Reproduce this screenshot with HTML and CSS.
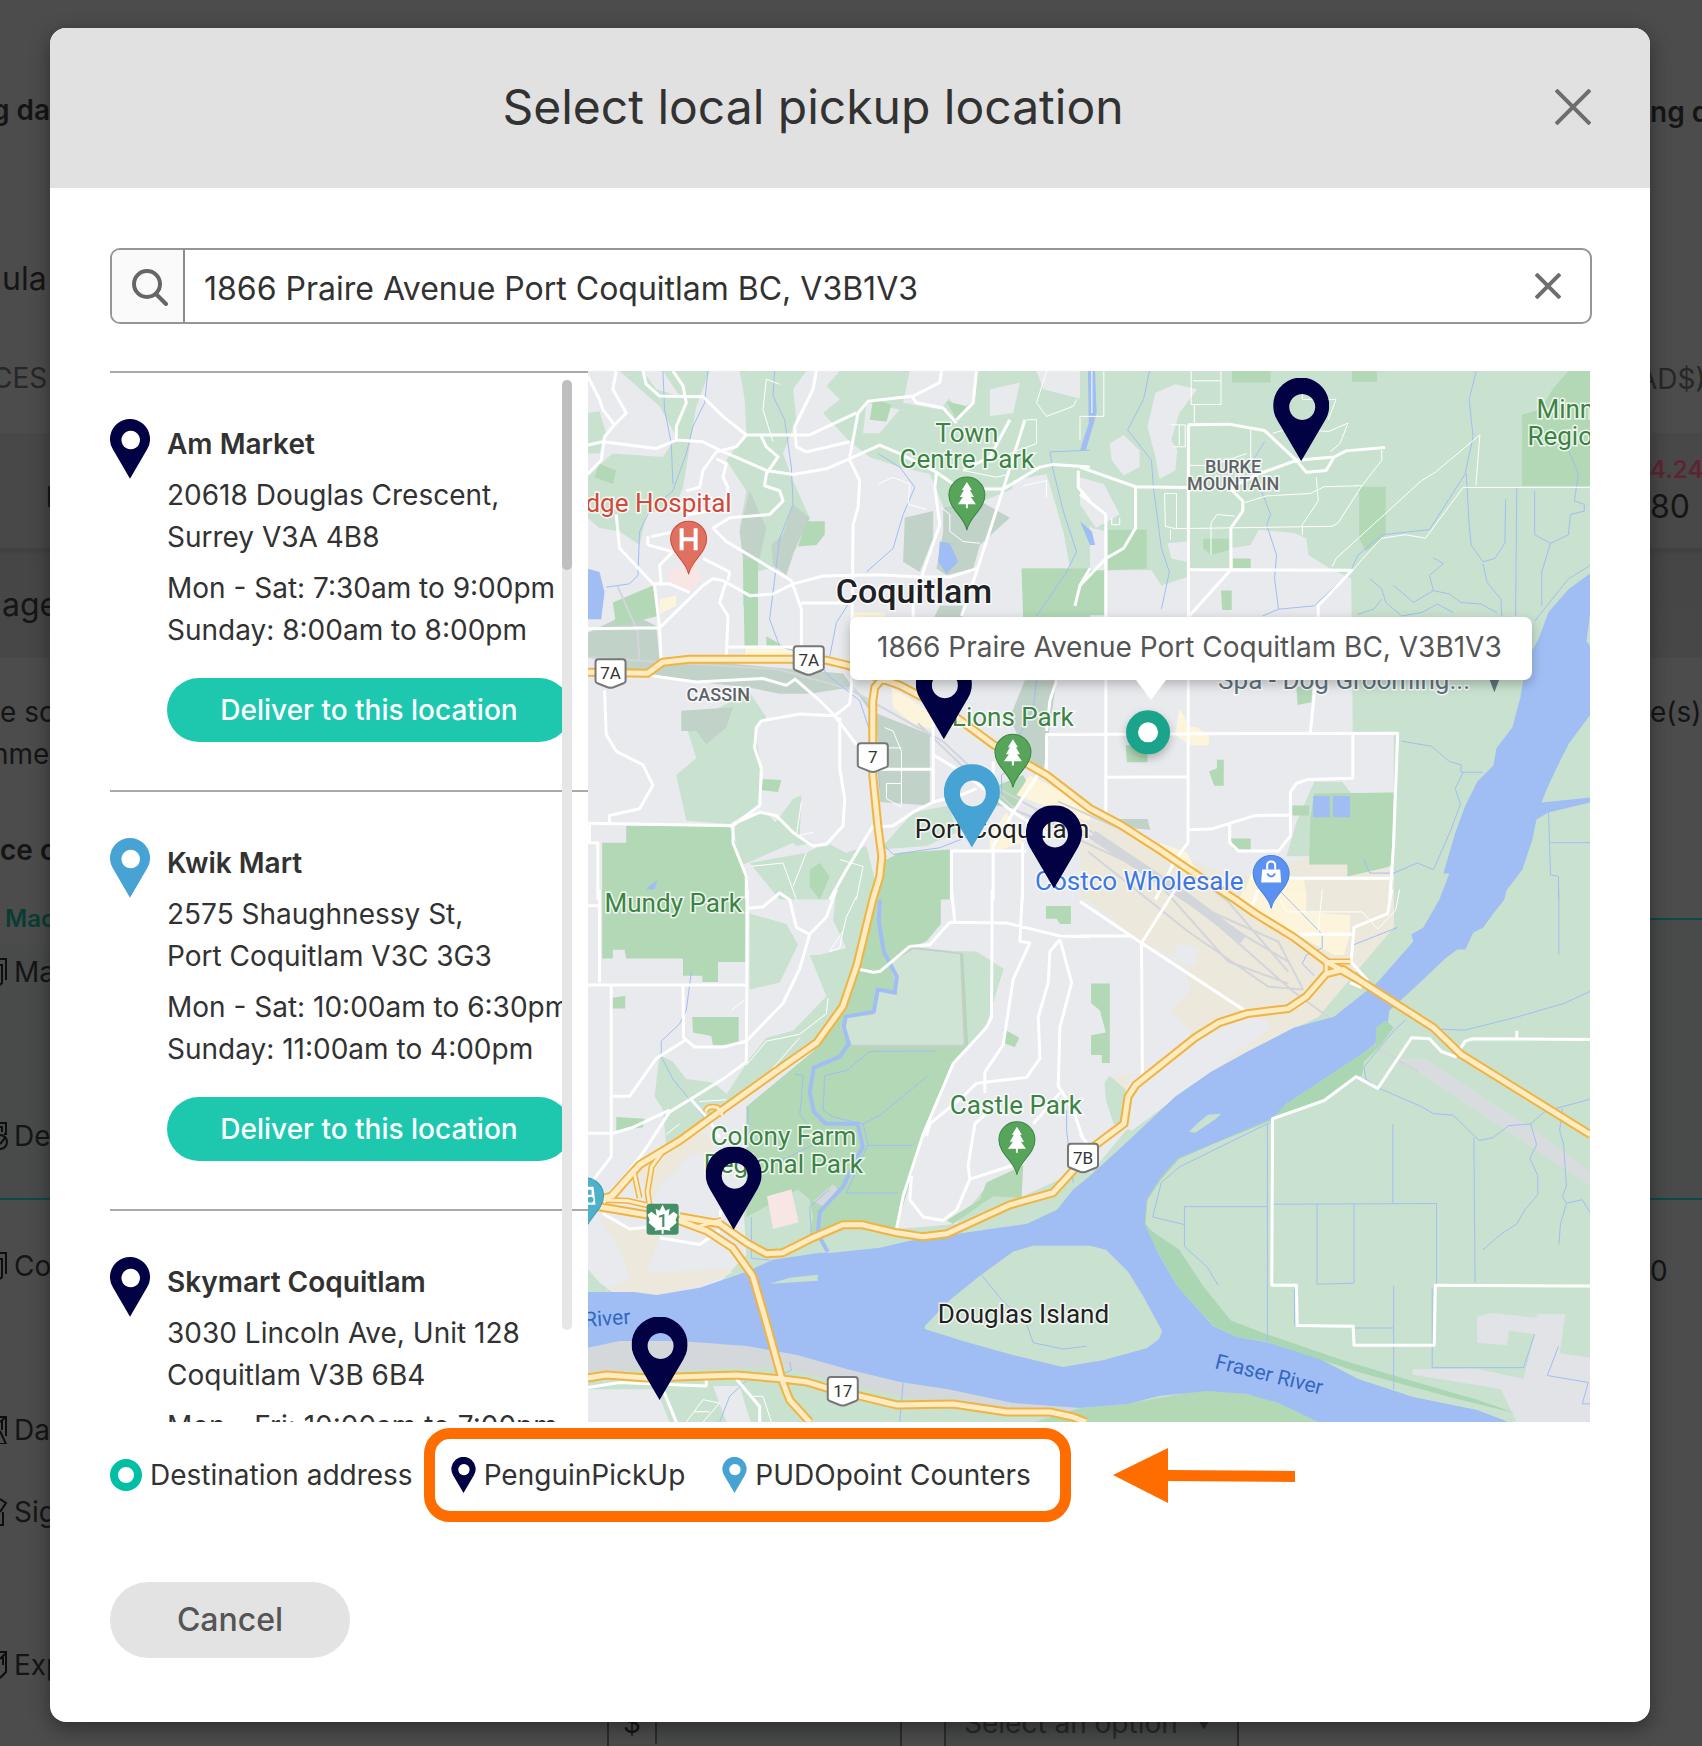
FILE: index.html
```html
<!DOCTYPE html>
<html lang="en">
<head>
  <meta charset="UTF-8" />
  <meta name="viewport" content="width=device-width, initial-scale=1.0" />
  <title>Select local pickup location</title>
  <link rel="stylesheet" href="styles.css">
</head>
<body>
  <!-- shared icon shapes -->
  <svg class="sprite" aria-hidden="true">
    <symbol id="pin" viewBox="0 0 56 83">
      <path fill="currentColor" fill-rule="evenodd" d="M28 83L4 42A28 28 0 1 1 52 42ZM29 16a13 13 0 1 0 .01 0Z" />
    </symbol>
    <symbol id="poi" viewBox="-20 -20 40 56" overflow="visible">
      <path d="M0 35C-2 22-18 14-18 0A18 18 0 0 1 18 0C18 14 2 22 0 35Z" />
    </symbol>
    <symbol id="tree" viewBox="-20 -20 40 56" overflow="visible">
      <path fill="#57a55b" stroke="#3c8443" d="M0 35C-2 22-18 14-18 0A18 18 0 0 1 18 0C18 14 2 22 0 35Z" />
      <path fill="#fff" d="M0-13L5-5H3L7 2H4L9 9H1V13H-1V9H-9L-4 2H-7L-3-5H-5Z" />
    </symbol>
    <symbol id="shield" viewBox="-16 -15 32 30" overflow="visible">
      <path fill="#fff" stroke="#777" stroke-width="2" d="M-12-14H12Q15-14 15-11V8Q15 9 13 10L3 14Q0 15-3 14L-13 10Q-15 9-15 8V-11Q-15-14-12-14Z" />
    </symbol>
    <symbol id="opt-copy" viewBox="0 0 8 28"><path d="M0 1H6V21H5M0 7H2V25L0 27" /></symbol>
    <symbol id="opt-check" viewBox="0 0 8 28"><path d="M0 1H6V12H4M0 5H2V10M0 13A7 7 0 0 1 0 27M0 22L5 16" /></symbol>
    <symbol id="opt-date" viewBox="0 0 8 28"><path d="M0 1H6V20M0 6L6 1M2 5V14M0 15L6 28H0" /></symbol>
    <symbol id="opt-sign" viewBox="0 0 8 28"><path d="M0 1L6 5L0 14M3 14V27H0" /></symbol>
    <symbol id="opt-box" viewBox="0 0 8 28"><path d="M0 1H6V21L0 27M0 8L6 2M3 6V14" /></symbol>
  </svg>

  <!-- page behind the dialog -->
  <div class="page" aria-hidden="true">
    <div class="page-left">
      <b class="cut">g da</b>
      <span class="big">ula</span>
      <span class="muted">CES</span>
      <b class="row-band">I</b>
      <span class="big">age</span>
      <span>e so</span>
      <span class="cut">nme</span>
      <b>ce o</b>
      <b class="teal">Mac</b>
      <span class="opt"><svg><use href="#opt-copy" /></svg>Ma</span>
      <span class="opt"><svg><use href="#opt-check" /></svg>De</span>
      <span class="opt"><svg><use href="#opt-copy" /></svg>Co</span>
      <span class="opt"><svg><use href="#opt-date" /></svg>Da</span>
      <span class="opt"><svg><use href="#opt-sign" /></svg>Sig</span>
      <span class="opt"><svg><use href="#opt-box" /></svg>Exp</span>
    </div>
    <div class="page-bottom">
      <span class="money"><i>$</i></span>
      <span class="select">Select an option <i>▼</i></span>
    </div>
    <div class="page-right">
      <b>ng d</b>
      <span class="muted">AD$)</span>
      <b class="red">4.24</b>
      <span class="big">80</span>
      <span>e(s),</span>
      <span>0</span>
    </div>
  </div>

  <main class="modal" role="dialog" aria-labelledby="title">
    <header class="modal-header">
      <h1 id="title">Select local pickup location</h1>
      <button class="icon-btn" aria-label="Close">
        <svg width="36" height="36" viewBox="0 0 36 36"><path d="M1 1L35 35M35 1L1 35" stroke="#6e6e6e" stroke-width="4" /></svg>
      </button>
    </header>

    <div class="modal-body">
      <form class="search">
        <label class="search-icon" for="address" aria-label="Search address">
          <svg width="38" height="38" viewBox="0 0 38 38" fill="none" stroke="#666" stroke-width="4" stroke-linecap="round"><circle cx="16" cy="16" r="13" /><path d="M25 26L35 36" /></svg>
        </label>
        <input id="address" type="text" value="1866 Praire Avenue Port Coquitlam BC, V3B1V3">
        <button class="icon-btn" type="button" aria-label="Clear">
          <svg width="26" height="26" viewBox="0 0 26 26"><path d="M1 1L25 25M25 1L1 25" stroke="#6e6e6e" stroke-width="4" /></svg>
        </button>
      </form>

      <div class="results">
        <div class="list">
          <article class="place">
            <svg class="pin navy"><use href="#pin" /></svg>
            <div class="place-info">
              <h2>Am Market</h2>
              <p>20618 Douglas Crescent,<br>Surrey V3A 4B8</p>
              <p>Mon - Sat: 7:30am to 9:00pm<br>Sunday: 8:00am to 8:00pm</p>
              <button class="deliver">Deliver to this location</button>
            </div>
          </article>
          <article class="place">
            <svg class="pin blue"><use href="#pin" /></svg>
            <div class="place-info">
              <h2>Kwik Mart</h2>
              <p>2575 Shaughnessy St,<br>Port Coquitlam V3C 3G3</p>
              <p>Mon - Sat: 10:00am to 6:30pm<br>Sunday: 11:00am to 4:00pm</p>
              <button class="deliver">Deliver to this location</button>
            </div>
          </article>
          <article class="place">
            <svg class="pin navy"><use href="#pin" /></svg>
            <div class="place-info">
              <h2>Skymart Coquitlam</h2>
              <p>3030 Lincoln Ave, Unit 128<br>Coquitlam V3B 6B4</p>
              <p>Mon - Fri: 10:00am to 7:00pm</p>
            </div>
          </article>
          <div class="scrollbar"><div class="thumb"></div></div>
        </div>

        <div class="map">
          <svg class="map-art" viewBox="0 0 1002 1050" preserveAspectRatio="xMidYMid slice">
            <rect width="1002" height="1050" fill="#e8eaed" />

            <!-- land, one group per tile -->
            <g transform="matrix(.3333 0 0 .338 -8 -2)">
              <g fill="#c9e2cf">
                <path d="M24 130L60 125 80 190 60 250 24 250ZM120 6L190 6 230 60 300 80 250 6H390L350 110 310 350 290 400 200 430 180 520 120 480 60 470 24 440V310L100 250 250 260 290 200 240 110Z" />
                <path d="M480 6H680L640 60 650 150 610 250 640 330 690 440 650 530 610 580 530 600 530 700 490 700 490 520 480 470 500 360 440 270 500 190 495 90Z" />
                <path d="M780 6H990L970 100 1080 120 1180 6H1530V740H1330V590L1390 560 1470 590 1450 480 1380 320 1260 370 1100 430 1050 310 960 290 870 260 810 215 730 130 780 90 740 50Z" />
                <path d="M305 1010L380 1020 460 980 500 940 560 1030 525 1060 545 1180 540 1290 450 1345 320 1335 290 1200 350 1150Z" />
                <path d="M510 1460L680 1430 740 1400 800 1430 860 1410 900 1568H600ZM640 1270L665 1260 660 1380 700 1400 650 1410 580 1350ZM460 1340L560 1310 640 1400 480 1470ZM1000 1310L1110 1290 1130 1370 1040 1410 900 1420Z" />
              </g>
              <g fill="#e8eaed">
                <path d="M1000 6L1190 6 1180 100 1130 120 1090 60 990 80ZM860 100L960 120 900 190 850 190ZM1230 60L1320 40 1300 130 1230 140ZM1370 6L1500 6 1510 90 1390 60ZM880 300L1000 300 1040 420 960 440 900 340ZM1300 330L1400 310 1450 480 1470 590 1320 590 1200 590 1290 420Z" />
              </g>
              <g fill="#c1d2c8">
                <path d="M510 360L560 470 540 560 490 560 480 480ZM640 400L690 440 650 520 620 610 580 580 575 520 610 490ZM24 780L150 720 230 760 240 860 440 870 790 900 870 1010 1050 1080V1290L900 1280 890 1010 820 940 690 960 600 960 500 940 200 910 24 850Z" />
                <path d="M305 1010L460 1000 440 1060 380 1110 350 1070 305 1070ZM975 440L1060 420V500L1020 600 970 570ZM1090 410L1200 390 1290 440 1200 520 1180 590 1100 610 1070 590 1090 480ZM1335 920H1430L1390 1190 1350 1170 1290 1030ZM1080 700L1150 700 1150 740H1060Z" />
              </g>
              <g fill="#b2d8b6">
                <path d="M490 560H535V840H495ZM680 450H735V490L710 520 655 525ZM880 90L935 105 920 155 870 150ZM60 280L110 300 100 340 45 320ZM100 690L220 640 235 730 110 760ZM560 790L630 830 560 830ZM550 1212L605 1215 595 1250 545 1245ZM1100 95L1160 110 1130 150ZM1325 590H1530V740H1330Z" />
                <path d="M140 1350H450L495 1480 500 1568H68V1400H140ZM690 1480L720 1460 750 1500 720 1568 690 1530ZM900 1460L960 1430 1110 1420V1568H885ZM1230 1240L1330 1200 1350 1240 1310 1300 1250 1290Z" />
              </g>
              <path fill="#fdf4dc" d="M240 680L290 670 290 700 240 725ZM935 940L1060 1020 1060 1065 1000 1050 940 1000ZM820 720H915V735H820ZM495 825H640V845H495ZM1350 1200L1530 1290V1340L1310 1260ZM1230 1380L1280 1310 1330 1400 1230 1430Z" />
              <path fill="#f8e6e4" d="M265 600L350 570 365 625 330 655 270 630Z" />
              <path fill="#a1bef4" d="M24 590L60 600 75 660 65 740 24 740ZM1080 510L1110 515 1135 570 1100 605 1075 570ZM200 1535L235 1510 220 1550Z" />
            </g>
            <g transform="matrix(.3967 0 0 .338 492 -2)">
              <path fill="#c9e2cf" d="M0 6H1286V1568H790V1075H687L683 620 630 590 575 550 570 500 540 485 450 475 430 520 380 530V590L270 600V615L205 640 180 595H70L70 480 30 470 0 400ZM590 1220H660L687 1260V1330L580 1440 520 1440 545 1340Z" />
              <path fill="#e8eaed" d="M240 45L295 60 250 130 230 210 245 240 240 300 200 325 190 260 170 170 190 70ZM75 220L110 195 150 240V290L110 315 80 270ZM0 320L60 340 100 430 40 470 0 400ZM220 515L270 510V570L230 560Z" />
              <path fill="#b2d8b6" d="M70 475H168V590L70 595ZM0 595H62V728H0ZM383 6H480V40H383ZM685 6H748V38H685ZM1230 6H1286V345H1113V135L1160 120 1190 60ZM703 348H770V490L720 540 703 500ZM310 502H375V535L330 550 310 530ZM385 560H430V588H385ZM355 655H382V712H358ZM115 1112H170V1162H118ZM345 1155H362V1232H338L325 1190 345 1180ZM545 940L585 930 583 985 548 993ZM535 1290H577V1320H535ZM590 1255L790 1252 785 1465 735 1500H673V1465H577L580 1330ZM380 1388H430V1422L385 1418Z" />
              <path fill="#ede8dc" d="M0 1330L80 1350 200 1400 330 1480 430 1500 577 1440 577 1465H673V1500L785 1470 790 1568H0Z" />
              <path fill="#fdf4dc" d="M200 1400L270 1430 300 1500 260 1490ZM430 1490L565 1510 570 1568H410ZM250 1005L265 1030 270 1055 295 1060 325 1085V1112L275 1112 240 1080Z" />
              <path fill="#a1bef4" d="M587 1262H628L630 1325H587ZM637 1262H680V1325H637ZM20 6H38L42 130 15 240 0 240 22 160ZM0 450L30 480 38 520 25 520Z" />
              <path fill="#c1d2c8" d="M80 1330H170L177 1362 110 1355Z" />
            </g>
            <g transform="matrix(.3333 0 0 .3444 -8 518)">
              <path fill="#c9e2cf" d="M510 70L620 100 655 160 600 270 510 290ZM770 0H870L830 220 790 340 700 460 430 640 370 600 430 610 510 490 560 430 640 410 740 310 690 190 720 190 800 170 760 90ZM240 480L280 500 320 550 400 560 450 600 400 650 260 740 250 640 225 600ZM490 900L700 850 950 985 1130 970 1220 860 1330 890 1530 800V1000L900 1040 500 1110 420 1140 460 1100 500 1060ZM24 1100L60 1140 100 1168H24ZM24 1310L120 1310 640 1350 1530 1505V1568H24Z" />
              <path fill="#b2d8b6" d="M68 0H497V210H415V268H368V250H310V200H140L135 175H100V200H68ZM97 315L137 308V345H97ZM338 370H477V452H400L395 425 340 415ZM110 660L195 665 190 690 110 700ZM1398 48L1473 48V100L1440 100 1430 85H1398ZM1272 405L1318 430 1305 457 1270 445ZM1220 850L1330 800 1325 895 1240 890 1120 970 1100 960 1200 900Z" />
              <path fill="#b2d8b6" d="M880 0H1083V100L1040 150 990 170 1150 185 1270 230 1220 390 1120 510 1040 680 950 985 840 965 790 965 700 1000 610 1050 560 1050 500 1000V630L700 470 790 330Z" />
              <path fill="#cfe4d5" stroke="#c3cfc8" stroke-width="2" d="M1000 170L1143 185 1155 453H815L785 400 800 370 880 360 890 290 950 300 930 210Z" />
              <path fill="#c9e2cf" d="M500 950L655 870 690 900 700 950 690 1000 600 1050 500 1030ZM1100 178L1190 180 1270 230 1220 390 1165 450 1150 185Z" />
              <path fill="#ede8dc" d="M160 800L300 730 380 700 400 760 330 770 240 860 220 900ZM60 950L180 985 240 1010 200 1110 240 1110 440 1100 460 1110 350 1155 230 1177 165 1168 80 1160 150 1130 130 1060Z" />
              <path fill="#f8e6e4" d="M562 890L635 870 657 965 580 985Z" />
              <path fill="#d4d8da" d="M24 1330L120 1310 300 1305 500 1322 650 1350 960 1430 1530 1510V1550L960 1470 600 1385 24 1400ZM700 905L760 855 775 870 735 920Z" />
              <path fill="#e8eaed" d="M24 1450L230 1450 280 1568H24ZM400 1440L480 1440 520 1568H450Z" />
            </g>
            <g transform="matrix(.3967 0 0 .3444 492 518)">
              <path fill="#c9e2cf" d="M790 0H1286V1545H0V860L115 700 240 600 540 400 790 110ZM62 560L75 540 115 580 110 680 85 680 65 610Z" />
              <path fill="#ede8dc" d="M0 0H790V110L600 370 400 480 240 600H200L330 500 480 400 470 380 420 370 290 430 230 350 280 290 250 200 155 155 30 40ZM80 540L130 535 115 580Z" />
              <path fill="#fdf4dc" d="M410 0H570V65L680 75V130L665 190 640 190 560 140 530 130 400 30Z" />
              <path fill="#e8eaed" d="M240 155L300 170 290 220 265 220 240 190ZM130 700L115 690 150 600 300 450 480 395 470 410 200 640Z" />
              <path fill="#b2d8b6" d="M28 273H75V503H55V480H28V423L65 415 50 350 28 330ZM0 1505L120 1492 320 1450 430 1465 500 1490 610 1550H-130Z" />
              <path fill="#d9dcde" d="M800 490L870 490 1000 590 1160 710 1286 820V860L1060 690Z" />
              <path fill="#e1e3e7" d="M1000 1240L1035 1228 1150 1243V1232H1222L1208 1345 1286 1358V1545H1100L1060 1450 960 1430 838 1408V1392L1000 1390 1117 1420 1145 1290 1080 1280 1075 1322 1000 1315Z" />
            </g>

            <!-- rail yard -->
            <g fill="none" stroke="#d2d5da" stroke-width="2">
              <path d="M0 286L190 298 262 318 355 370 430 440 500 465 620 545 705 620 760 660 830 700M430 440L560 500 640 590 700 612M480 450L600 530 690 570 715 618M470 430L560 470 640 530 700 600M500 480L600 560 680 615 715 618M330 352L380 400 470 450M500 458L650 560 700 590M30 215L50 260 52 290" />
              <path stroke-width="9" d="M505 463L600 527 655 568" />
            </g>

            <!-- rivers -->
            <path fill="#a1bef4" d="M0 920L47 920 69 923 112 916 159 900 185 888 232 881 244 881 292 876 322 869 439 852 469 838 485 818 502 804 536 773 587 725 623 700 659 680 706 656 746 645 789 611 825 570 823 563 835 556 851 528 861 502 855 502 867 461 877 434 889 410 905 394 908 377 924 356 932 326 938 289 950 268 960 241 980 218 1002 202V343L980 373 968 397 960 414 953 431 1002 426V431L960 441 948 448 944 468 934 498 918 519 916 528 905 542 895 556 885 561 877 578 869 578 857 587 837 606 821 621 801 639 799 656 786 673 774 682 756 695 738 706 698 735 682 749 623 773 591 787 573 807 559 828 557 852 571 883 589 914 625 954 649 965 678 970 730 986 770 1007 825 1025 889 1038 920 1050H730L690 1031 659 1022 619 1019 571 1024 540 1032 492 1036 425 1031 359 1017 312 1010 259 997 209 983 159 974 92 969 32 969 0 976Z" />
            <path fill="#c9e2cf" d="M337 954L362 928 392 904 425 880 445 874 502 874 518 878 540 900 555 924 574 959 571 967 559 976 516 988 475 995 425 983 375 969 337 957ZM182 912L202 906 230 903 230 909ZM610 751L620 743 633 742 628 747 607 761 601 760ZM1002 240L998 270 1002 275Z" />
            <g transform="matrix(.3967 0 0 .3444 492 518)" fill="#aad6b3">
              <path d="M745 450L745 400 770 380 790 400 755 455 715 500 710 540 695 543 610 615 480 665 330 740 250 780 205 840 170 900 165 970 180 990 250 1045 310 1150 380 1250 470 1290 660 1365 820 1420 1000 1480 1100 1520 940 1475 700 1400 470 1312 395 1298 335 1265 245 1150 200 1060 163 970 168 900 203 835 248 778 480 670 520 620 620 545Z" />
            </g>

            <!-- creeks -->
            <g class="creek">
              <path d="M292 528L291 550 296 580 309 605 307 621 290 618 286 640 258 645 256 655 261 672 252 685 226 696 222 720 226 740 238 752 270 752 275 775 255 815 232 840 230 862 240 880" stroke-width="4" />
              <g transform="matrix(.3333 0 0 .338 -8 -2)">
                <path d="M250 6L255 120 275 220 280 340M385 6L375 100 340 170 320 250 280 360 210 420 180 480 175 610 150 635 80 645M585 6L580 80 615 150 635 290 640 400 600 500 570 740 600 820 700 850 750 910 840 980 890 1130 900 1240M895 250L960 290 1005 350 970 430 940 530 860 600M815 680L770 750 750 850M1530 240L1410 245 1420 300 1450 420 1490 540 1460 600 1370 730M910 1405L940 1435 1080 1415 1170 1380M1370 920L1360 1000 1320 1080 1310 1170 1265 1200 1265 1260" />
              </g>
              <g transform="matrix(.3967 0 0 .338 492 -2)">
                <path d="M175 6L160 90 120 180 180 270 185 350 205 530 225 600 205 710M465 215L430 280 480 430 470 460 495 550 490 620 500 710 460 730M500 710L590 700 680 600 700 550 760 490 880 475 970 310 990 200 980 90 998 6M973 310L980 460 985 520 1015 570 1045 560 1070 515 1072 385M1015 575L1025 630 1060 680 1062 730M1100 350L1097 730M1145 360L1145 490 1185 515 1230 490 1235 430 1270 420 1270 400 1245 390 1255 310 1230 240M1185 515L1163 600V700M1286 580L1230 620 1145 745M890 558L915 575 880 610 890 655 840 690 790 640M890 655L930 665 960 690 1010 695 1050 720M730 620L760 650 770 690 810 730 860 720 900 695 940 720M700 725L740 710 760 680M810 1100L885 1115 930 1160 960 1170V1192H1015M965 1192L945 1240 958 1285 935 1360 890 1480 850 1460 790 1490 730 1490 715 1450M1180 1310L1185 1495 1205 1500V1568M1185 1400H1286" />
              </g>
              <g transform="matrix(.3333 0 0 .3444 -8 518)">
                <path d="M335 240L320 350 300 390 245 440 245 485 280 550 390 680M1070 468L870 470 800 525 735 540 730 640 760 660 850 680 865 740 800 880H955M850 680L900 655 1045 540M865 742H1000M505 630V740M645 535L670 540 665 610 660 650 690 690M700 740L620 780 540 790M695 1000L690 920 750 870M515 950V1070L570 1075M1205 1118L1265 1190 1340 1260 1360 1315 1450 1333 1520 1325M500 1425L450 1470 420 1545M1460 640V700L1480 850M970 1430L960 1545M630 1370L635 1395 600 1410" />
              </g>
              <g transform="matrix(.3967 0 0 .3444 492 518)">
                <path d="M500 0L610 130 610 170 570 190 560 215 590 250M690 160L800 110M1206 0V190M1286 295L1220 330 1100 370 970 408 910 405M820 378L790 410 715 515 720 550 750 575 860 630 890 650 940 655 1005 728 1040 720 1080 685 1135 680 1170 645 1215 630 1286 608M1135 680L1150 740 1133 780 1153 830V885L1120 930 1100 970 1060 1000 1015 1045M1215 635L1208 700 1218 740 1225 860 1215 890 1225 910 1210 970 1206 1030M1225 910L1265 900 1286 940M480 675L250 805 205 850 183 950 263 972M472 680V1310M472 920L263 920V1035L320 1095 348 1148M485 913L898 911V1148M597 913V1145L690 1142V913M788 680V910M992 720L995 1140M540 1160V1265M690 1272H790M790 1150V1450M887 1155V1387H1117L1145 1290M1205 1325L1177 1410 1280 1430 1265 1492H1286" />
              </g>
            </g>

            <!-- local roads -->
            <g class="road">
              <g transform="matrix(.3333 0 0 .338 -8 -2)">
                <path d="M24 20L60 90 70 120 105 165 75 200 65 270 24 312M110 6L100 60 140 130 105 165M24 225L70 215 230 235 290 210 370 215 420 240 560 300 640 312 740 295 810 265 900 225 960 250 1070 305 1120 340 1200 355 1270 355 1380 290 1420 282 1530 290M190 6L200 45 240 80 370 82 430 140 500 195 690 195 830 130M290 210L290 170 320 100 310 50 280 6M710 6L700 60 645 170 650 230 680 245 810 215M500 195L470 230 410 245 370 300 360 350 320 360M410 265L440 280 430 320 445 350 440 390 390 420 325 430M545 200L560 230 595 260 560 310 555 345 600 360 610 390 570 430 450 440 400 470 440 510 635 625M110 430L120 530 225 640 240 765M370 560L450 600 445 625M330 660L270 635H225M215 495L290 480M205 520L280 540 240 580 245 640M205 495V520" />
                <path d="M810 270L840 330 835 410 820 460 815 940 810 990 765 1025 660 1020 545 1040 530 1060 525 1120 545 1180 540 1290 460 1350 24 1343M810 260L835 130 865 95 1000 80 1080 40 1085 6M995 80L1010 100 1090 115 1130 160M1190 6L1180 100 1130 150M240 765L370 640 400 620 430 625 510 670 580 665 640 635 730 612 900 608 1020 615 1110 615 1190 590M1070 305L1065 350 1080 460 1030 600 1000 700V740M1270 355L1190 600 1145 730M1335 150L1270 355M1290 150L1230 260 1150 300M24 768L240 765 245 860M75 950L80 1080 110 1130 190 1170 220 1230 180 1300 90 1320V1345M650 920L720 980 765 1025 830 1110M205 905L350 925 550 915 620 935 650 915M1060 1000V1280L1000 1310 940 1350 880 1355M440 850L445 730 420 690 440 625M635 625L665 710V820M665 692H815M440 822H640M780 1030V1180L795 1270 790 1350 740 1405 700 1410 640 1370 590 1320 540 1310 460 1345M895 1183H1055M460 1350V1400L500 1500V1568M1060 1140L1160 1200 1300 1310 1400 1370M1060 1280L1140 1260 1190 1240M1240 1160V1250M1380 1190L1300 1310 1240 1410V1568M1400 1190V1080H1530M1400 1070L1410 980 1430 920M1115 1568V1425H1340M1328 1400V1568M30 1345V1400H55V1568M750 1568L800 1480 880 1350M1485 700L1500 640 1530 590M1495 300V350L1530 390" />
              </g>
              <g transform="matrix(.3967 0 0 .338 492 -2)">
                <path d="M273 165V740L272 1400 240 1450 190 1568M65 430V1320M273 165L375 163 465 182 545 270 640 260 670 242 768 232M545 270L450 310 380 350M0 290L140 348 273 350M140 350V470L110 530 65 560 0 640M0 370L65 430M273 593L685 595 600 700V730L590 960 580 1078M0 1080L272 1078 800 1077 790 1400 780 1568M65 1207L270 1205M273 1362L330 1360 440 1320 530 1318V1250L545 1225 575 1213 687 1210V1078M377 1340V1400L400 1425H500L530 1380V1318M380 355L410 390V420L380 470V593L275 730M430 1505H790M545 270L570 305 620 300 640 260" />
              </g>
              <g transform="matrix(.3333 0 0 .3444 -8 518)">
                <path d="M503 0L500 500 430 550 330 610 270 645 200 750 100 880M24 277H500M95 280V775L24 865M310 280L312 430 345 457H430L500 440 610 330 660 230 690 130 650 110 630 30 600 10 550 50 500 55M690 130L740 80 770 0M95 600H150L230 490 320 435M24 707H100L160 690 270 640M60 0V270M24 47H60M330 605L390 670 420 720M830 230L880 240 900 238 990 165 1050 160 1110 95 1280 97 1440 135 1530 137M1115 0L1125 95M1328 0L1320 150 1350 155 1300 260 1270 450 1215 530V590M1237 0L1235 370 1220 400 1120 505 1030 710 970 890 950 985M1440 145L1410 180 1405 270 1375 370 1380 490 1340 545 1190 562 1150 600 1050 680 1040 715M1440 145L1475 270 1440 400 1435 570 1480 640 1510 725M995 830L990 900 1030 950 1090 960 1130 930 1170 840 1300 800M1170 840L1165 800 1185 680 1230 640M1360 680L1440 590M70 940L150 985 200 980M240 1010L360 1030 420 990M423 930V970M24 1445L120 1430 380 1440 380 1420M470 1420L540 1500V1545M250 1450L290 1545" />
              </g>
              <g transform="matrix(.3967 0 0 .3444 492 518)">
                <path d="M240 0L155 155 157 540M0 35L155 155 420 355M0 135H130M785 0L775 70 690 110 683 210 725 265M540 130H685M680 270L710 285M1286 435L990 433 970 440 945 485 910 470 880 433 835 430 750 577 695 543 615 612 485 665 483 1148H545L547 1265 688 1267 690 1322H892L895 1148 1286 1150M1100 410V433M0 710L20 740M450 0L430 55" />
              </g>
            </g>
            <g class="road thin">
              <g transform="matrix(.3333 0 0 .338 -8 -2)">
                <path d="M600 45L560 30 550 120 580 215M895 340L940 320 990 340 985 400 1040 415M1085 410L1110 430 1110 480 1150 510 1200 515M1340 150H1370V220L1290 250M1400 6L1370 100 1400 140 1480 110 1490 90M1150 300L1250 320 1290 310M1330 345L1400 330V380M915 1060L940 1070 965 1130V1290M920 1120H965M920 1225H965M920 1225V1270L965 1295M515 1470L610 1460 650 1568M680 1430L640 1530M780 1450L850 1470 830 1568M665 1280L650 1380 700 1370" />
              </g>
              <g transform="matrix(.3967 0 0 .338 492 -2)">
                <path d="M280 6V105H355V6M285 35H355M288 160V105M228 165H265V230H235M250 165V225M275 285H330L420 250M485 190L530 175M430 180V270M580 180L625 185 675 160 655 220 630 245M560 60L560 90 645 90 625 150M415 395L470 375 580 368 615 348 710 345 760 270V240M595 320L600 390 560 460V490M710 345L650 455 635 465 240 472 215 465 213 368H243V470M228 475V505M330 550L330 455 345 430 390 435M635 585L645 560 860 330 895 305 1007 195 997 345M687 595L720 550 760 500 820 490 870 500 965 350H1286M0 210V140H60V6M30 6V130M80 440V460H100V440" />
              </g>
              <g transform="matrix(.3333 0 0 .3444 -8 518)">
                <path d="M790 120L750 180 780 170 790 120 800 80 830 20M745 315L740 360 660 420 560 440 500 510M660 430L560 540M260 710L300 680M455 350L495 320M370 1480L320 1545M370 1480L420 1490 370 1545M345 1515H390M520 1470H550L575 1545M360 615L440 610" />
              </g>
              <g transform="matrix(.3967 0 0 .3444 492 518)">
                <path d="M500 20L520 65H710L750 115 795 60 805 0M610 0L600 120" />
              </g>
            </g>

            <!-- highways -->
            <g class="hwy-edge">
              <path id="hw" d="M0 301L60 302 75 291 102 288H205L239 289 260 294 292 307 312 314 359 339 405 373 459 404 502 437 532 453 571 478 611 505 647 528 667 542 706 566 738 590 770 608 845 656 873 683 1002 763M294 308L287 316 285 330V404L290 454 294 485 292 505 285 528 269 594 255 635 229 671 192 697 125 745 92 769 52 793 25 824 10 828M0 833L59 843 92 849 119 859 145 876 165 904 179 952 195 1010 202 1028 222 1050M92 845L132 852 159 871 179 882 195 881 225 866 255 853H275L309 861 335 865 359 862 422 833 465 821 485 799 508 773 536 752 540 725 548 713 607 666 631 651 659 642 700 637 718 625 738 602 755 598 770 608M0 1006L19 1003 59 1006 149 1003 195 1007 219 1010 242 1017 309 1033 365 1032 419 1040H462L485 1045 498 1050" />
            </g>
            <g class="ramp-edge"><path id="rp" d="M16 831L46 798 52 826M62 834L60 820 64 795 75 780M10 828L40 829 62 834M118 740Q120 733 130 736L135 744M110 855L134 848M738 592V600M738 590H762" /></g>
            <use class="ramp-fill" href="#rp" />
            <use class="hwy-fill" href="#hw" />

            <!-- place names -->
            <g class="label green">
              <text x="379" y="71" text-anchor="middle">Town</text>
              <text x="379" y="97" text-anchor="middle">Centre Park</text>
              <text x="364" y="355">Lions Park</text>
              <text x="17" y="540">Mundy Park</text>
              <text x="362" y="742">Castle Park</text>
              <text x="123" y="773">Colony Farm</text>
              <text x="116" y="801">Regional Park</text>
              <text x="948" y="47">Minnekhada</text>
              <text x="939" y="74">Regional Park</text>
            </g>
            <text class="label red-text" x="144" y="141" text-anchor="end">dge Hospital</text>
            <text class="label city" x="248" y="232">Coquitlam</text>
            <text class="label dark" x="327" y="467">Port Coquitlam</text>
            <text class="label dark" x="350" y="951">Douglas Island</text>
            <text class="label shop" x="447" y="519">Costco Wholesale</text>
            <text class="label slate" x="630" y="318">Spa - Dog Grooming...</text>
            <path fill="#5f7380" d="M898 300H914L906 321Z" />
            <g class="label area">
              <text x="99" y="330">CASSIN</text>
              <text x="645" y="102" text-anchor="middle">BURKE</text>
              <text x="645" y="119" text-anchor="middle">MOUNTAIN</text>
            </g>
            <g class="river">
              <text transform="translate(-3 955) rotate(-4)">River</text>
              <text transform="translate(626 996) rotate(14)">Fraser River</text>
            </g>

            <!-- points of interest -->
            <use href="#tree" x="359" y="104" width="40" height="56" />
            <use href="#tree" x="405" y="361" width="40" height="56" />
            <use href="#tree" x="409" y="748" width="40" height="56" />
            <use href="#poi" x="81" y="148" width="40" height="56" fill="#e07060" stroke="#cf4a3c" />
            <path d="M94 157V179M108 157V179M94 168H108" stroke="#fff" stroke-width="4" />
            <use href="#poi" x="663" y="482" width="40" height="56" fill="#5b91f0" stroke="#4a80e0" />
            <path fill="#fff" d="M674 498H692L693 511H673Z" /><path fill="none" stroke="#fff" stroke-width="2" d="M679 498V494Q679 490 683 490 687 490 687 494V498" /><path fill="none" stroke="#5b91f0" stroke-width="2" d="M679 502Q683 508 687 502" />
            <use href="#poi" x="-22" y="804" width="40" height="56" fill="#4fb0c9" stroke="#3b9cb5" />
            <path fill="#fff" d="M-8 815H6L8 833H-8Z" /><circle cx="3" cy="828" r="3" fill="#4fb0c9" /><path fill="#4fb0c9" d="M-4 818H4V823H-4Z" />

            <!-- route shields -->
            <g class="shields">
              <use href="#shield" x="7" y="287" width="32" height="30" /><text x="23" y="308">7A</text>
              <use href="#shield" x="205" y="274" width="32" height="30" /><text x="221" y="295">7A</text>
              <use href="#shield" x="269" y="371" width="32" height="30" /><text x="285" y="392">7</text>
              <use href="#shield" x="479" y="771" width="32" height="30" /><text x="495" y="792">7B</text>
              <use href="#shield" x="239" y="1004" width="32" height="30" /><text x="255" y="1025">17</text>
            </g>
            <rect x="59" y="832" width="32" height="31" rx="3" fill="#448f68" />
            <path fill="#fff" d="M75 833L78 839 82 837 81 844 86 840 90 843 88 848 89 851 82 857 83 859 76 858V862H74V858L67 859 68 857 61 851 62 848 60 843 64 840 69 844 68 837 72 839Z" />
            <text class="route-one" x="75" y="855" text-anchor="middle">1</text>

            <!-- pickup pins -->
            <g class="navy">
              <use href="#pin" x="685" y="7" width="56" height="83" />
              <use href="#pin" x="328" y="285" width="56" height="83" />
              <use href="#pin" x="438" y="434" width="56" height="83" />
              <use href="#pin" x="118" y="775" width="56" height="83" />
              <use href="#pin" x="44" y="945" width="56" height="83" />
            </g>
            <use class="blue" href="#pin" x="356" y="393" width="56" height="83" />
            <circle class="drop" cx="560" cy="361" r="16" fill="#fff" stroke="#1ba48c" stroke-width="12" />
          </svg>
          <div class="tooltip">1866 Praire Avenue Port Coquitlam BC, V3B1V3</div>
        </div>
      </div>

      <div class="legend">
        <span class="legend-item"><i class="ring"></i>Destination address</span>
        <div class="highlight">
          <span class="legend-item"><svg class="pin small navy"><use href="#pin" /></svg>PenguinPickUp</span>
          <span class="legend-item"><svg class="pin small blue"><use href="#pin" /></svg>PUDOpoint Counters</span>
        </div>
        <svg class="arrow" width="182" height="56" viewBox="0 0 182 56"><path fill="#ff6c00" d="M0 28L55 1V23L182 24V35L55 34V56Z" /></svg>
      </div>

      <button class="cancel">Cancel</button>
    </div>
  </main>
</body>
</html>
```

FILE: styles.css
```css
* {
  box-sizing: border-box;
}
body {
  margin: 0;
  font-family: Inter, "Liberation Sans", sans-serif;
  font-size: 28px;
  line-height: 42px;
  color: #323232;
  background: #4c4c4c;
}
h1, h2, p {
  margin: 0;
}
button, input {
  font: inherit;
  border: 0;
  padding: 0;
}
.sprite {
  position: absolute;
  width: 0;
  height: 0;
}

/* Page behind the dialog */
.page {
  position: absolute;
  inset: 0;
  overflow: hidden;
  display: grid;
  grid-template-columns: 50px 1fr 52px;
  color: #151515;
  white-space: nowrap;
  background: linear-gradient(#4c4c4c 433px, #484848 433px, #484848 547px, #404040 549px, #464646 556px, #474747 658px, #4c4c4c 658px, #4c4c4c 945px, #484b4a 945px, #484b4a 1198px, #0b4b42 1198px, #0b4b42 1200px, #4c4c4c 1200px);
}
.page-left, .page-right {
  display: grid;
  align-items: end;
  align-content: start;
  overflow: hidden;
}
.page-left {
  grid-template-rows: 131px 169px 99px 119px 108px 107px 42px 96px 69px 53px 164px 130px 164px 82px 153px;
}
.page-right {
  grid-template-rows: 133px 267px 91px 37px 205px 559px;
  background: linear-gradient(transparent 918px, #0b4b42 918px, #0b4b42 920px, #484b4a 920px, #484b4a 945px, transparent 945px);
}
.page b {
  font-weight: 600;
}
.cut {
  margin-left: -8px;
}
.big {
  font-size: 32px;
}
.page-left .big {
  padding-left: 2px;
}
.muted {
  color: #272727;
  margin-left: -8px;
}
.page-right .muted {
  margin-left: -12px;
}
.page .row-band {
  padding-left: 46px;
}
.page .teal {
  color: #0b3c34;
  font-size: 24px;
  padding-left: 5px;
}
.page .red {
  color: #5e2430;
  font-size: 24px;
}
.opt {
  display: flex;
  align-items: center;
  gap: 6px;
}
.opt svg {
  flex: none;
  width: 8px;
  height: 28px;
  fill: none;
  stroke: #0e0e0e;
  stroke-width: 2px;
}
.page-bottom {
  align-self: end;
  display: flex;
  gap: 42px;
  height: 44px;
  padding-left: 557px;
}
.page-bottom i {
  font-style: normal;
}
.money, .select {
  width: 295px;
  color: #151515;
  background: #474a49;
  border: 2px solid #2b2b2b;
  border-width: 0 2px;
}
.money i {
  display: block;
  width: 48px;
  padding-left: 14px;
  border-right: 2px solid #2b2b2b;
  background: #4c4c4c;
}
.select {
  padding-left: 18px;
  color: #282828;
}
.select i {
  font-size: 16px;
  vertical-align: 4px;
  padding-left: 10px;
}

/* Dialog */
.modal {
  position: relative;
  margin: 28px 52px 24px 50px;
  background: #fff;
  border-radius: 16px;
  overflow: hidden;
  box-shadow: 0 6px 20px rgba(0, 0, 0, 0.4);
}
.modal-header {
  display: flex;
  align-items: center;
  gap: 39px;
  height: 160px;
  padding: 0 59px 2px 60px;
  background: #e1e1e1;
}
.modal-header h1 {
  flex: 1;
  text-align: center;
  font-size: 48px;
  font-weight: 400;
  line-height: 60px;
}
.icon-btn {
  display: flex;
  background: none;
  cursor: pointer;
}
.modal-body {
  padding: 60px 60px 64px;
}
.search {
  display: flex;
  align-items: center;
  height: 76px;
  margin-right: -2px;
  padding-right: 29px;
  border: 2px solid #959595;
  border-radius: 10px;
  overflow: hidden;
}
.search-icon {
  display: flex;
  align-items: center;
  justify-content: center;
  width: 73px;
  height: 100%;
  padding: 2px 0 0 4px;
  background: #fafafa;
  border-right: 2px solid #8c8c8c;
}
.search input {
  flex: 1;
  height: 100%;
  padding: 4px 0 0 19px;
  font-size: 32px;
  color: #323232;
  outline: none;
}

.results {
  display: grid;
  grid-template-columns: 478px 1fr;
  margin-top: 47px;
}
.list {
  position: relative;
  height: 0;
  min-height: 100%;
  overflow: hidden;
}
.place {
  display: flex;
  gap: 17px;
  height: 419px;
  padding-top: 46px;
  border-top: 2px solid #a9a9a9;
}
.pin {
  flex: none;
  width: 40px;
  height: 60px;
}
.navy {
  color: #010144;
}
.blue {
  color: #46a3d3;
}
.place-info {
  padding-top: 4px;
  white-space: nowrap;
}
.place-info h2 {
  font-size: 28px;
  font-weight: 600;
}
.place-info p {
  margin-top: 9px;
}
.deliver {
  width: 404px;
  height: 64px;
  margin-top: 27px;
  border-radius: 32px;
  background: #1dc8af;
  color: #fff;
  font-weight: 500;
  cursor: pointer;
}
.scrollbar {
  position: absolute;
  top: 9px;
  right: 16px;
  width: 10px;
  height: 950px;
  background: #e6e6e6;
  border-radius: 5px;
}
.thumb {
  height: 190px;
  background: #bfbfbf;
  border-radius: 5px;
}

/* Map */
.map {
  position: relative;
  aspect-ratio: 1002 / 1051;
  overflow: hidden;
}
.map-art {
  display: block;
  width: 100%;
  height: 100%;
  font-family: Roboto, sans-serif;
}
.map-art path {
  vector-effect: non-scaling-stroke;
}
.creek {
  fill: none;
  stroke: #a1bef4;
  stroke-width: 1px;
}
.road {
  fill: none;
  stroke: #fff;
  stroke-width: 3px;
  stroke-linejoin: round;
}
.thin {
  stroke-width: 1px;
}
.hwy-edge, .hwy-fill, .ramp-edge, .ramp-fill {
  fill: none;
  stroke: #f0b440;
  stroke-width: 9px;
  stroke-linejoin: round;
}
.hwy-fill {
  stroke: #fdebc4;
  stroke-width: 5px;
}
.ramp-edge {
  stroke-width: 6px;
}
.ramp-fill {
  stroke: #fdebc4;
  stroke-width: 3px;
}
.label {
  font-size: 26px;
  stroke: rgba(255, 255, 255, 0.8);
  stroke-width: 3px;
  paint-order: stroke;
}
.green {
  fill: #3c8443;
}
.red-text {
  fill: #d0493a;
}
.dark {
  fill: #222;
}
.city {
  font-size: 34px;
  font-weight: 500;
  fill: #202124;
}
.shop {
  fill: #3b78e7;
}
.slate {
  fill: #5f7380;
}
.area {
  font-size: 18px;
  font-weight: 500;
  fill: #5f6368;
}
.river {
  font-size: 21px;
  fill: #3468c0;
}
.shields {
  font-size: 17px;
  text-anchor: middle;
  fill: #333;
}
.route-one {
  font-size: 18px;
  font-weight: 500;
  fill: #448f68;
}
.drop {
  filter: drop-shadow(0 4px 4px rgba(0, 0, 0, 0.25));
}
.tooltip {
  position: absolute;
  top: 246px;
  left: 262px;
  padding: 9px 30px 12px 27px;
  white-space: nowrap;
  color: #555;
  background: #fff;
  border-radius: 8px;
  box-shadow: 0 4px 12px rgba(0, 0, 0, 0.25);
}
.tooltip::after {
  content: "";
  position: absolute;
  top: 100%;
  left: 286px;
  border: 15px solid transparent;
  border-top: 20px solid #fff;
  border-bottom: 0;
}

.legend {
  display: flex;
  align-items: center;
  margin-top: 6px;
}
.legend-item {
  display: flex;
  align-items: center;
  gap: 8px;
  white-space: nowrap;
}
.ring {
  width: 32px;
  height: 32px;
  border: 8px solid #00bfa5;
  border-radius: 50%;
}
.pin.small {
  width: 25px;
  height: 36px;
}
.highlight {
  display: flex;
  align-items: center;
  gap: 37px;
  height: 94px;
  margin-left: 11px;
  padding: 0 29px 0 16px;
  border: 11px solid #ff6c00;
  border-radius: 26px;
}
.arrow {
  margin-left: 42px;
}
.cancel {
  width: 240px;
  height: 76px;
  margin-top: 60px;
  border-radius: 38px;
  background: #e3e3e3;
  color: #555;
  font-size: 32px;
  font-weight: 500;
  cursor: pointer;
}
```
